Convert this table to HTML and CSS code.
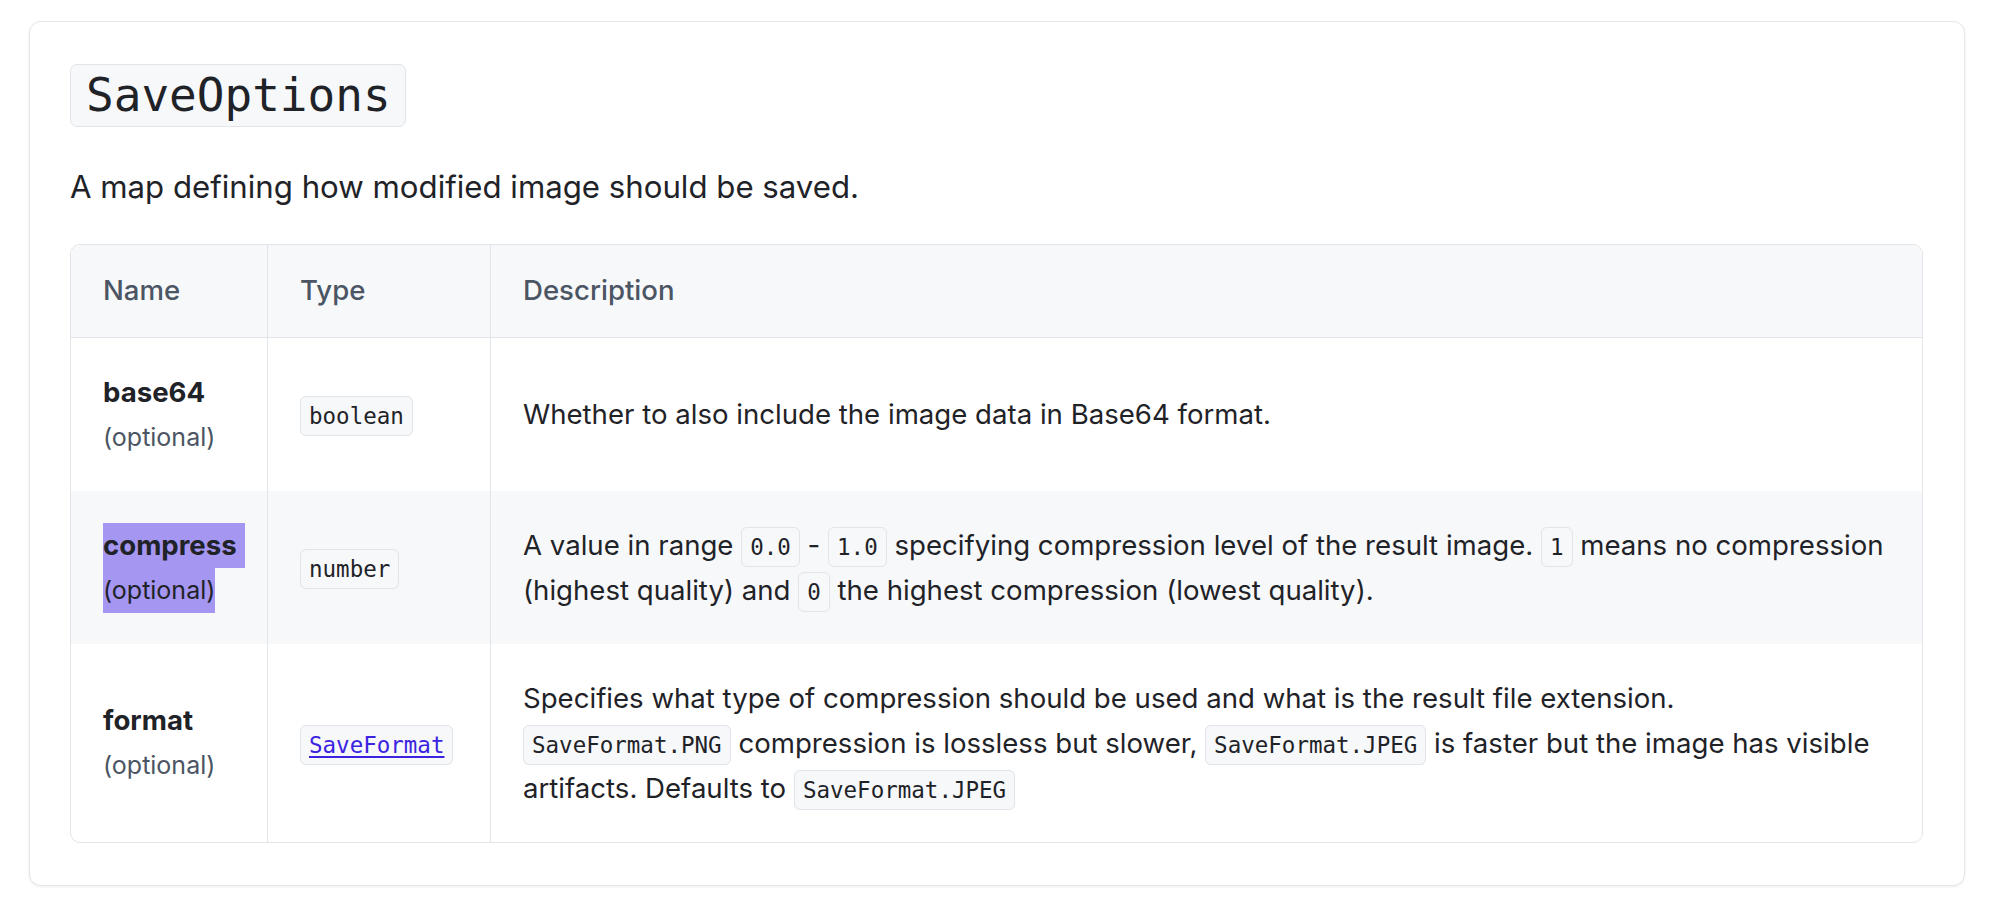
FILE: index.html
```html
<!DOCTYPE html>
<html lang="en">
<head>
<meta charset="utf-8">
<title>SaveOptions</title>
<link rel="stylesheet" href="styles.css">
</head>
<body>
<div class="page">
  <section class="card">
    <h2 class="title"><code class="title-code">SaveOptions</code></h2>
    <p class="lead">A map defining how modified image should be saved.</p>
    <table class="props">
      <colgroup>
        <col class="w-name">
        <col class="w-type">
        <col>
      </colgroup>
      <thead>
        <tr>
          <th class="col-name">Name</th>
          <th class="col-type">Type</th>
          <th class="col-desc">Description</th>
        </tr>
      </thead>
      <tbody>
        <tr>
          <td class="col-name"><div class="pname">base64</div><div class="opt">(optional)</div></td>
          <td class="col-type"><code class="ic">boolean</code></td>
          <td class="col-desc">Whether to also include the image data in Base64 format.</td>
        </tr>
        <tr class="stripe">
          <td class="col-name"><div class="pname"><span class="sel sel-first">compress</span></div><div class="opt"><span class="sel">(optional)</span></div></td>
          <td class="col-type"><code class="ic">number</code></td>
          <td class="col-desc">A value in range <code class="ic">0.0</code> - <code class="ic">1.0</code> specifying compression level of the result image. <code class="ic">1</code> means no compression (highest quality) and <code class="ic">0</code> the highest compression (lowest quality).</td>
        </tr>
        <tr>
          <td class="col-name"><div class="pname">format</div><div class="opt">(optional)</div></td>
          <td class="col-type"><code class="ic"><a class="link" href="#saveformat">SaveFormat</a></code></td>
          <td class="col-desc">Specifies what type of compression should be used and what is the result file extension.<br><code class="ic">SaveFormat.PNG</code> compression is lossless but slower, <code class="ic">SaveFormat.JPEG</code> is faster but the image has visible artifacts. Defaults to <code class="ic">SaveFormat.JPEG</code></td>
        </tr>
      </tbody>
    </table>
  </section>
</div>
</body>
</html>
```

FILE: styles.css
```css
* { box-sizing: border-box; }

html, body {
  margin: 0;
  padding: 0;
  background: #ffffff;
}

body {
  font-family: Inter, "Noto Sans", "Liberation Sans", sans-serif;
  color: #1f2328;
}

.page {
  padding: 21px 33px 40px 29px;
}

.card {
  border: 1px solid #e3e6ea;
  border-radius: 12px;
  background: #ffffff;
  box-shadow: 0 1px 3px rgba(0, 0, 0, 0.07);
  padding: 42px 41px 42px 40px;
}

.title {
  margin: 0;
  line-height: 0;
  font-weight: 400;
}

.title-code {
  display: inline-block;
  font-family: "DejaVu Sans Mono", "Liberation Mono", monospace;
  font-size: 46px;
  line-height: 55px;
  padding: 3px 14px 3px 15px;
  color: #1f2328;
  background: #f6f8fa;
  border: 1px solid #e1e4e8;
  border-radius: 7px;
}

.lead {
  margin: 38px 0 0 0;
  font-size: 31.2px;
  line-height: 44px;
  color: #1f2328;
}

.props {
  margin-top: 35px;
  width: 100%;
  table-layout: fixed;
  border-collapse: separate;
  border-spacing: 0;
  border: 1px solid #e1e4e8;
  border-radius: 10px;
  overflow: hidden;
  font-size: 27.6px;
  line-height: 45px;
}

.w-name { width: 196px; }
.w-type { width: 223px; }

.props th {
  text-align: left;
  font-weight: 500;
  color: #4b5563;
  background: #f6f8fa;
  padding: 23px 32px 24px;
  border-bottom: 1px solid #e1e4e8;
}

.props td {
  padding: 31.5px 32px;
  vertical-align: middle;
}

.props .col-type,
.props .col-desc {
  border-left: 1px solid #e1e4e8;
}

.stripe td {
  background: #f7f8fa;
}

.pname {
  font-weight: 700;
  color: #1f2328;
}

.opt {
  font-size: 25px;
  color: #4b5563;
}

.sel {
  display: inline-block;
  background: #a596f2;
  color: #1f2328;
}

.sel-first {
  padding-right: 8px;
}

.ic {
  font-family: "DejaVu Sans Mono", "Liberation Mono", monospace;
  font-size: 22.5px;
  line-height: 1;
  padding: 6px 8px;
  background: #f6f8fa;
  border: 1px solid #e1e4e8;
  border-radius: 6px;
  color: #1f2328;
}

.link {
  color: #3b23e0;
  text-decoration: underline;
  text-decoration-thickness: 2px;
  text-underline-offset: 3px;
}
```
